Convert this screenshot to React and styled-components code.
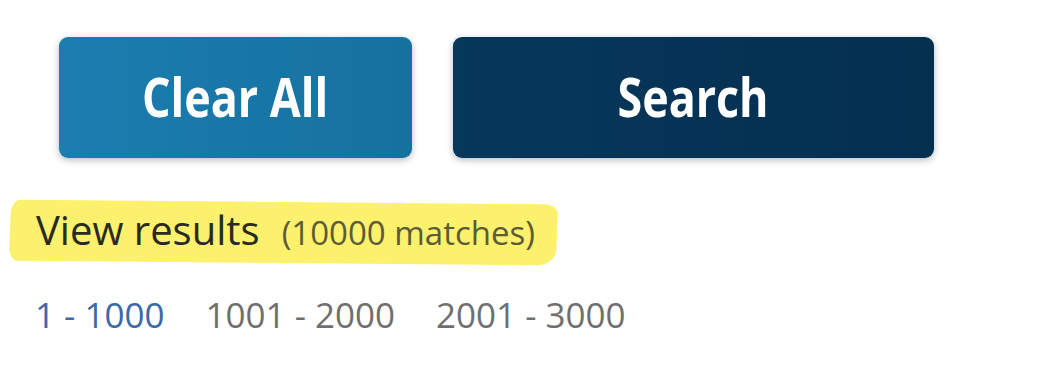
import styled, { createGlobalStyle } from 'styled-components'

const GlobalStyle = createGlobalStyle`
  html, body {
    margin: 0;
    padding: 0;
    background: #ffffff;
    font-family: "Open Sans", "Liberation Sans", sans-serif;
  }
`

const Page = styled.div`
  width: 1044px;
  height: 368px;
  display: flex;
  flex-direction: column;
  overflow: hidden;
`

const ButtonRow = styled.div`
  display: flex;
  gap: 41px;
  padding: 37px 0 0 59px;
`

const ActionButton = styled.button`
  width: ${(p) => p.$width}px;
  height: 121px;
  border: none;
  border-radius: 9px;
  background: ${(p) => p.$bg};
  box-shadow: 0 2px 7px rgba(0, 0, 0, 0.28);
  color: #ffffff;
  font-family: "Open Sans", "Liberation Sans", sans-serif;
  font-weight: 700;
  font-size: 54px;
  display: flex;
  align-items: center;
  justify-content: center;
  padding: 0 0 4px 0;
  cursor: pointer;
`

const Label = styled.span`
  display: inline-block;
  transform: scaleX(0.83);
`

const Results = styled.div`
  position: relative;
  align-self: flex-start;
  margin: 44px 0 0 10px;
  padding: 0 22px 6px 26px;
  display: flex;
  align-items: baseline;
  gap: 22px;
`

const Marker = styled.span`
  position: absolute;
  left: 0;
  right: 0;
  top: 0;
  bottom: 0;
  background: #fcf16c;
  border-radius: 10px 14px 18px 8px / 12px 10px 16px 14px;
  transform: rotate(0.5deg) skewX(-2deg);
  z-index: 0;
`

const ResultsTitle = styled.span`
  position: relative;
  z-index: 1;
  font-size: 40px;
  color: #2a2a20;
`

const ResultsCount = styled.span`
  position: relative;
  z-index: 1;
  font-size: 33px;
  color: #5c5a38;
`

const Pager = styled.div`
  display: flex;
  gap: 41px;
  padding: 28px 0 0 35px;
`

const PageLink = styled.a`
  font-size: 35px;
  color: ${(p) => (p.$active ? '#3b6aa6' : '#6f6f6f')};
  text-decoration: none;
  cursor: pointer;
`

export default function App() {
  const pages = ['1 - 1000', '1001 - 2000', '2001 - 3000']
  return (
    <Page>
      <GlobalStyle />
      <ButtonRow>
        <ActionButton $width={353} $bg="linear-gradient(90deg, #1b7db0, #16719f)">
          <Label>Clear All</Label>
        </ActionButton>
        <ActionButton $width={481} $bg="linear-gradient(90deg, #06385c, #052f4f)">
          <Label>Search</Label>
        </ActionButton>
      </ButtonRow>
      <Results>
        <Marker />
        <ResultsTitle>View results</ResultsTitle>
        <ResultsCount>(10000 matches)</ResultsCount>
      </Results>
      <Pager>
        {pages.map((p, i) => (
          <PageLink key={p} $active={i === 0}>
            {p}
          </PageLink>
        ))}
      </Pager>
    </Page>
  )
}
